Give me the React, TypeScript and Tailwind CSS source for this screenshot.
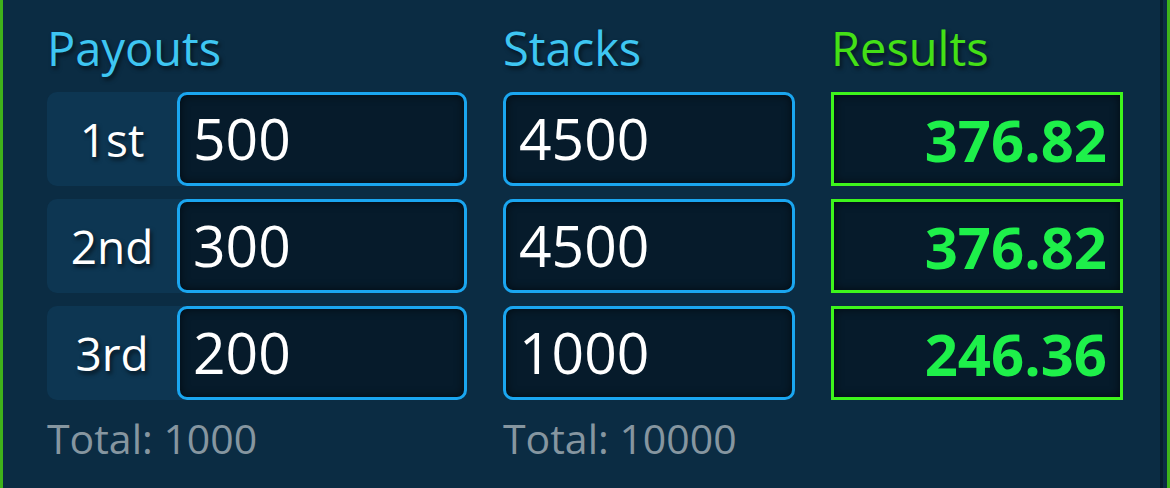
import React from "react";

const payouts = [
  { label: "1st", value: "500" },
  { label: "2nd", value: "300" },
  { label: "3rd", value: "200" },
];
const stacks = ["4500", "4500", "1000"];
const results = ["376.82", "376.82", "246.36"];

const font = { fontFamily: '"Open Sans", "Noto Sans", sans-serif' };

export default function App() {
  return (
    <div
      className="w-[1170px] h-[488px] bg-[#0b2c43] border-l-[3px] border-l-[#3fb21a] overflow-hidden flex"
      style={font}
    >
      <div className="flex-1 flex pl-[44px] pt-[18px] gap-[36px]">
        {/* Payouts */}
        <div className="flex flex-col w-[420px]">
          <div className="h-[74px] text-[47px] leading-[60px] text-[#3ec6f2] [text-shadow:2px_3px_4px_rgba(0,0,0,0.55)]">
            Payouts
          </div>
          <div className="flex flex-col gap-[13px]">
            {payouts.map((p) => (
              <div key={p.label} className="flex h-[94px] rounded-[10px] bg-[#0d3652]">
                <div className="w-[130px] flex items-center justify-center text-[46px] text-white [text-shadow:2px_3px_4px_rgba(0,0,0,0.6)]">
                  {p.label}
                </div>
                <div className="flex-1 rounded-[10px] border-[3px] border-[#1aa6f0] bg-[#061b2b] shadow-[inset_0_0_10px_rgba(0,0,0,0.6)] flex items-center pl-[13px] text-[57px] text-white">
                  {p.value}
                </div>
              </div>
            ))}
          </div>
          <div className="mt-[10px] text-[41px] text-[#8696a0] leading-[56px]">Total: 1000</div>
        </div>
        {/* Stacks */}
        <div className="flex flex-col w-[292px]">
          <div className="h-[74px] text-[47px] leading-[60px] text-[#3ec6f2] [text-shadow:2px_3px_4px_rgba(0,0,0,0.55)]">
            Stacks
          </div>
          <div className="flex flex-col gap-[13px]">
            {stacks.map((s, i) => (
              <div
                key={i}
                className="h-[94px] rounded-[10px] border-[3px] border-[#1aa6f0] bg-[#061b2b] shadow-[inset_0_0_10px_rgba(0,0,0,0.6)] flex items-center pl-[13px] text-[57px] text-white"
              >
                {s}
              </div>
            ))}
          </div>
          <div className="mt-[10px] text-[41px] text-[#8696a0] leading-[56px]">Total: 10000</div>
        </div>
        {/* Results */}
        <div className="flex flex-col w-[292px]">
          <div className="h-[74px] text-[47px] leading-[60px] text-[#44e016] [text-shadow:2px_3px_4px_rgba(0,0,0,0.55)]">
            Results
          </div>
          <div className="flex flex-col gap-[13px]">
            {results.map((r, i) => (
              <div
                key={i}
                className="h-[94px] border-[3px] border-[#3ef51c] bg-[#061b2b] shadow-[inset_0_0_10px_rgba(0,0,0,0.6)] flex items-center justify-end pr-[13px] text-[58px] font-bold text-[#1ef04a]"
              >
                {r}
              </div>
            ))}
          </div>
        </div>
      </div>
      <div className="w-[3px] bg-[#071d2c]" />
      <div className="w-[4px] bg-[#0b2c43]" />
      <div className="w-[3px] bg-[#3fb21a]" />
    </div>
  );
}
